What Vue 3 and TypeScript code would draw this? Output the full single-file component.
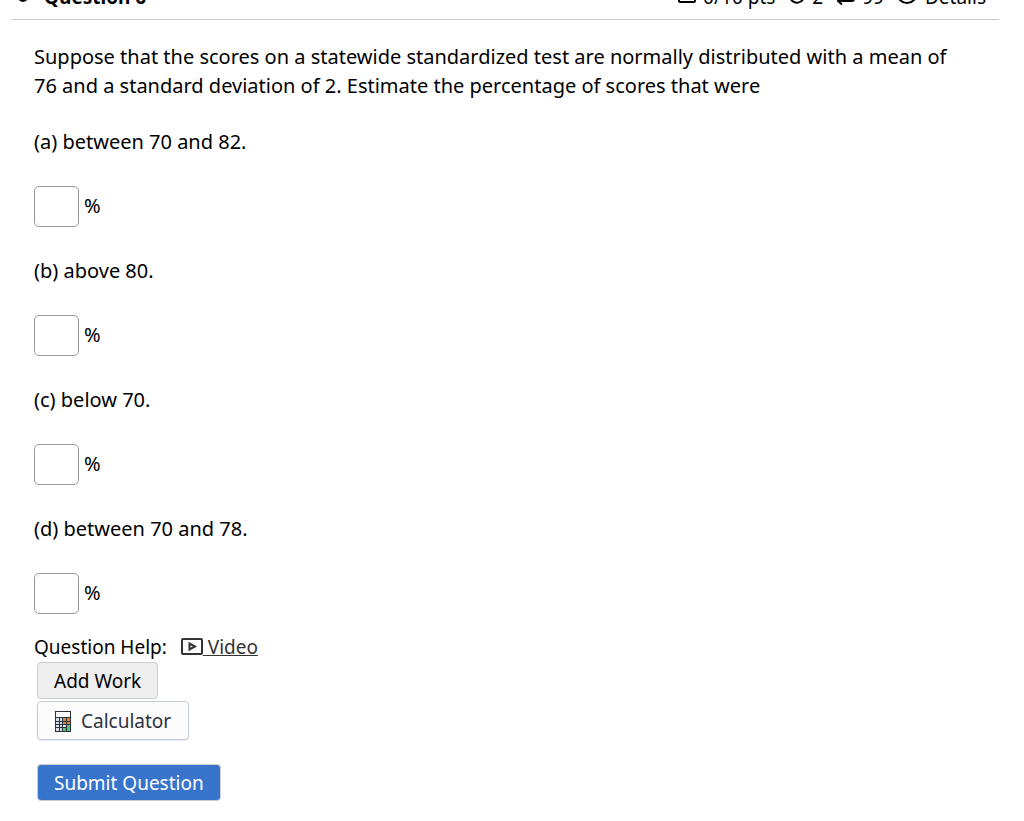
<script setup lang="ts">
import { reactive } from 'vue'

interface Part {
  id: string
  prompt: string
}

const parts: Part[] = [
  { id: 'a', prompt: '(a) between 70 and 82.' },
  { id: 'b', prompt: '(b) above 80.' },
  { id: 'c', prompt: '(c) below 70.' },
  { id: 'd', prompt: '(d) between 70 and 78.' },
]

const answers = reactive<Record<string, string>>({ a: '', b: '', c: '', d: '' })
</script>

<template>
  <main class="page">
    <header class="bar">
      <h1 class="title"><span class="dot" aria-hidden="true"></span>Question 6</h1>
      <div class="stats">
        <span class="stat">
          <svg width="20" height="20" viewBox="0 0 20 20" aria-hidden="true">
            <rect x="2" y="1" width="16" height="14" rx="1" />
            <path d="M6 6l3 3 6-7" />
          </svg>
          0/10 pts
        </span>
        <span class="stat">
          <svg width="18" height="20" viewBox="0 0 18 20" aria-hidden="true">
            <path d="M2 3v5.500a7 7 0 1 0 3-5.500M2 1v4h4" />
          </svg>
          2
        </span>
        <span class="stat">
          <svg width="20" height="20" viewBox="0 0 20 20" aria-hidden="true">
            <path d="M2 6V3h14M13 0l3 3-3 3M18 9v3q0 2-2 2H2M6 10l-4 4 4 3.500" />
          </svg>
          99
        </span>
        <span class="stat">
          <svg width="22" height="20" viewBox="0 0 22 20" aria-hidden="true">
            <circle cx="10" cy="6.500" r="9.500" />
            <path d="M10 3v4" />
          </svg>
          Details
        </span>
      </div>
    </header>

    <form class="question" @submit.prevent>
      <p class="intro">
        Suppose that the scores on a statewide standardized test are normally distributed with a mean of 76 and a
        standard deviation of 2. Estimate the percentage of scores that were
      </p>
      <div class="parts">
        <div v-for="part in parts" :key="part.id">
          <label class="prompt" :for="'answer-' + part.id">{{ part.prompt }}</label>
          <div class="answer">
            <input :id="'answer-' + part.id" v-model="answers[part.id]" class="box" type="text" autocomplete="off" />
            <span class="unit">%</span>
          </div>
        </div>
      </div>

      <div class="help">
        <span>Question Help:</span>
        <a class="video" href="#video">
          <svg width="22" height="20" viewBox="0 0 22 20" aria-hidden="true">
            <rect x="1" y="1" width="20" height="15" rx="1" />
            <path d="M8.500 5.500v6l5.500-3z" />
          </svg><span class="video-text">&nbsp;Video</span>
        </a>
      </div>

      <div class="actions">
        <button class="btn work" type="button">Add Work</button>
        <button class="btn calc" type="button">
          <svg width="16" height="21" viewBox="0 0 16 21" aria-hidden="true">
            <rect width="16" height="21" fill="#2b333f" />
            <rect x="1" y="1" width="14" height="5" fill="#fff" />
            <path d="M1 7h3v3H1zM5 7h2v3H5zM1 11h3v2H1zM5 11h2v2H5zM1 14h3v2H1zM5 14h2v2H5zM8 14h3v2H8zM1 17h3v3H1zM5 17h2v3H5z" fill="#d5dbe2" />
            <path d="M8 7h3v3H8zM12 7h3v3h-3zM8 11h3v2H8zM12 11h3v2h-3z" fill="#e8823a" />
            <path d="M12 14h3v6h-3zM8 17h3v3H8z" fill="#4fc873" />
          </svg>
          Calculator
        </button>
        <button class="btn submit" type="submit">Submit Question</button>
      </div>
    </form>
  </main>
</template>

<style>
body {
  margin: 0;
  background: #fff;
}
</style>

<style scoped>
.page {
  font-family: "Noto Sans", "Open Sans", sans-serif;
  font-size: 20px;
  line-height: 29px;
  color: #000;
  padding: 0 25px 20px 12px;
}

.bar {
  display: flex;
  justify-content: space-between;
  align-items: flex-end;
  height: 19px;
  padding: 0 13px 0 6px;
  overflow: hidden;
  border-bottom: 1px solid #c8c8c8;
}

.title,
.stats {
  display: flex;
  align-items: center;
  margin: 0 0 9px;
  font-size: 19px;
  line-height: 26px;
}

.title {
  gap: 16px;
  font-weight: 700;
}

.dot {
  width: 10px;
  height: 10px;
  border-radius: 50%;
  background: #000;
}

.stats {
  gap: 13px;
}

.stat {
  display: flex;
  align-items: center;
  gap: 6px;
}

.stat svg {
  fill: none;
  stroke: #000;
  stroke-width: 2;
}

.question {
  padding: 22px 32px 0 22px;
}

.intro {
  margin: 0 0 27px;
}

.parts {
  display: grid;
  gap: 29px;
}

.prompt {
  display: block;
  width: fit-content;
}

.answer {
  display: flex;
  align-items: center;
  gap: 5px;
  margin-top: 30px;
}

.unit {
  padding-bottom: 2px;
}

.box {
  box-sizing: border-box;
  width: 45px;
  height: 41px;
  padding: 4px 8px;
  border: 1px solid #999;
  border-radius: 5px;
  background: #fff;
  font: inherit;
}

.help {
  display: flex;
  gap: 14px;
  margin-top: 19px;
  font-size: 19px;
}

.video {
  display: flex;
  align-items: center;
  color: #333;
  text-decoration: none;
}

.video svg {
  fill: none;
  stroke: #333;
  stroke-width: 2;
}

.video-text {
  text-decoration: underline;
}

.actions {
  display: flex;
  flex-direction: column;
  align-items: flex-start;
  margin-left: 3px;
}

.btn {
  display: flex;
  align-items: center;
  height: 37px;
  padding: 2px 16px 0;
  border: 1px solid #ccc;
  border-radius: 4px;
  font: inherit;
  font-size: 19px;
}

.work {
  background: #eee;
  color: #000;
}

.calc {
  gap: 10px;
  height: 39px;
  margin-top: 2px;
  padding: 1px 17px 0;
  border-color: #c3ccd4;
  background: #fcfcfd;
  box-shadow: 0 1px 1px #e4e7eb;
  color: #2b333f;
}

.submit {
  margin-top: 24px;
  background: #3873cc;
  color: #fff;
}
</style>
